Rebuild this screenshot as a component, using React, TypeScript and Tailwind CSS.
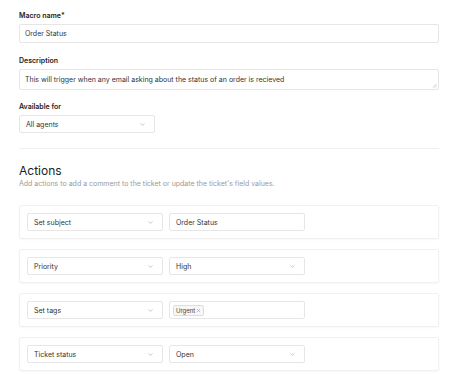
import { ChevronDown, X } from 'lucide-react';

const actions = [
  { field: 'Set subject', value: 'Order Status', kind: 'input' },
  { field: 'Priority', value: 'High', kind: 'select' },
  { field: 'Set tags', value: 'Urgent', kind: 'tags' },
  { field: 'Ticket status', value: 'Open', kind: 'select' },
];

function SelectBox({ label, className = '' }: { label: string; className?: string }) {
  return (
    <div
      className={`flex h-[18px] items-center justify-between rounded-[2px] border border-[#e6e6e6] bg-white pl-[6px] pr-[8px] text-[#333] ${className}`}
    >
      <span>{label}</span>
      <ChevronDown className="h-[7px] w-[7px] text-[#a0a0a0]" strokeWidth={2} />
    </div>
  );
}

export default function App() {
  return (
    <div className="min-h-screen bg-white px-[19px] pt-[12px] text-[7px] leading-none text-[#333] [font-family:Inter,'Liberation_Sans',sans-serif]">
      <div className="w-[420px]">
        <label className="block h-[8px] font-semibold text-[#222]">Macro name*</label>
        <div className="mt-[4px] flex h-[19px] items-center rounded-[2px] border border-[#e6e6e6] px-[5px]">
          Order Status
        </div>

        <label className="mt-[14px] block h-[8px] font-semibold text-[#222]">Description</label>
        <div className="relative mt-[4px] flex h-[21px] items-center rounded-[2px] border border-[#e6e6e6] px-[5px]">
          This will trigger when any email asking about the status of an order is recieved
          <svg className="absolute bottom-[1px] right-[1px] h-[5px] w-[5px]" viewBox="0 0 5 5">
            <path d="M4.5 1 L1 4.5 M4.5 3 L3 4.5" stroke="#aaa" strokeWidth="0.6" />
          </svg>
        </div>

        <label className="mt-[13px] block h-[8px] font-semibold text-[#222]">Available for</label>
        <SelectBox label="All agents" className="mt-[4px] w-[136px]" />

        <div className="mt-[15px] h-px bg-[#efefef]" />

        <h2 className="mt-[16px] h-[12px] text-[12px] font-normal text-[#222]">Actions</h2>
        <p className="mt-[3px] h-[8px] text-[7px] text-[#9a9a9a]">
          Add actions to add a comment to the ticket or update the ticket's field values.
        </p>

        <div className="mt-[17px] flex flex-col gap-[10px]">
          {actions.map((a) => (
            <div
              key={a.field}
              className="flex h-[34px] items-center gap-[6px] rounded-[2px] border border-[#f0f0f0] px-[7px] shadow-[0_1px_2px_rgba(0,0,0,0.03)]"
            >
              <SelectBox label={a.field} className="w-[136px]" />
              {a.kind === 'input' && (
                <div className="flex h-[18px] w-[136px] items-center rounded-[2px] border border-[#e6e6e6] px-[6px]">
                  {a.value}
                </div>
              )}
              {a.kind === 'select' && <SelectBox label={a.value} className="w-[136px]" />}
              {a.kind === 'tags' && (
                <div className="flex h-[18px] w-[136px] items-center rounded-[2px] border border-[#e6e6e6] px-[3px]">
                  <span className="flex h-[11px] items-center gap-[1px] rounded-[2px] border border-[#ddd] bg-[#f7f7f7] px-[2px] text-[6px] leading-[9px] text-[#444]">
                    <span className="leading-[9px]">{a.value}</span>
                    <X className="h-[5px] w-[5px] text-[#777]" strokeWidth={2} />
                  </span>
                </div>
              )}
            </div>
          ))}
        </div>
      </div>
    </div>
  );
}
